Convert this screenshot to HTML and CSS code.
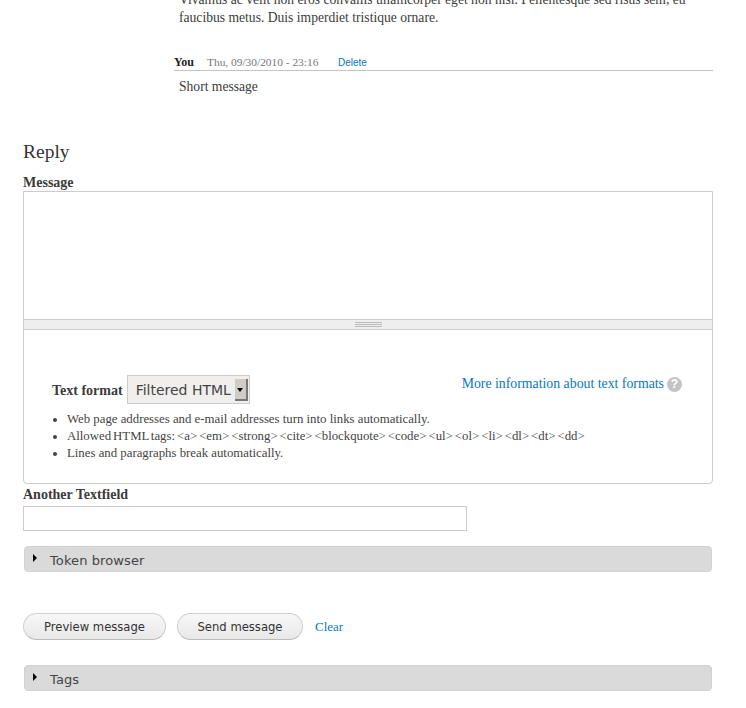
FILE: index.html
```html
<!DOCTYPE html>
<html lang="en">
<head>
    <meta charset="UTF-8">
    <title>Reply</title>
    <link rel="stylesheet" href="styles.css">
</head>
<body>
    <div class="page">

        <div class="thread">
            <p class="msg-body first">Vivamus ac velit non eros convallis ullamcorper eget non nisl. Pellentesque sed risus sem, eu faucibus metus. Duis imperdiet tristique ornare.</p>
            <div class="msg-head">
                <strong class="author">You</strong>
                <span class="date">Thu, 09/30/2010 - 23:16</span>
                <a class="delete" href="#">Delete</a>
            </div>
            <p class="msg-body">Short message</p>
        </div>

        <h2 class="reply-title">Reply</h2>

        <form class="reply-form" autocomplete="off">
            <label class="field-label" for="message">Message</label>
            <div class="editor">
                <textarea id="message" class="message-input"></textarea>
                <div class="grippie"><span class="grip-lines"></span></div>
                <div class="format">
                    <div class="format-top">
                        <div class="format-pick">
                            <label class="format-label">Text format</label>
                            <div class="fake-select">
                                <span>Filtered HTML</span>
                                <span class="select-arrow"></span>
                            </div>
                        </div>
                        <div class="format-help">
                            <a href="#">More information about text formats</a>
                            <span class="help-icon">?</span>
                        </div>
                    </div>
                    <ul class="tips">
                        <li>Web page addresses and e-mail addresses turn into links automatically.</li>
                        <li class="tip-tags">Allowed HTML tags: &lt;a&gt; &lt;em&gt; &lt;strong&gt; &lt;cite&gt; &lt;blockquote&gt; &lt;code&gt; &lt;ul&gt; &lt;ol&gt; &lt;li&gt; &lt;dl&gt; &lt;dt&gt; &lt;dd&gt;</li>
                        <li>Lines and paragraphs break automatically.</li>
                    </ul>
                </div>
            </div>

            <label class="field-label another" for="another">Another Textfield</label>
            <input type="text" id="another" class="text-input">

            <div class="fold token"><span class="fold-arrow"></span>Token browser</div>

            <div class="actions">
                <button type="button" class="btn preview">Preview message</button>
                <button type="button" class="btn send">Send message</button>
                <a class="clear" href="#">Clear</a>
            </div>

            <div class="fold tags"><span class="fold-arrow"></span>Tags</div>
        </form>

    </div>
</body>
</html>
```

FILE: styles.css
```css
html, body { margin: 0; padding: 0; background: #fff; }
body {
    height: 708px;
    overflow: hidden;
    font-family: "Liberation Serif", serif;
    font-size: 13.6px;
    color: #3b3b3b;
}
a { color: #0678be; text-decoration: none; }

.page { padding: 0 33px 0 23px; margin-top: -9px; }

/* message thread */
.thread { margin-left: 151px; }
.msg-body { margin: 0; padding-left: 5px; line-height: 18px; }
.msg-body.first { height: 36px; }
.msg-head {
    display: flex;
    align-items: baseline;
    margin-top: 27px;
    padding-top: 1px;
    height: 15px;
    line-height: 15px;
    border-bottom: 1px solid #c4c4c4;
    font-size: 11.4px;
}
.author { color: #222; width: 33px; font-size: 12px; }
.date { color: #777; width: 131px; }
.delete { font-family: "Liberation Sans", sans-serif; font-size: 10px; }
.thread .msg-body:last-child { margin-top: 7px; }

.reply-title { margin: 43px 0 0; font-size: 19.5px; font-weight: normal; line-height: 26px; color: #333; }

/* form */
.field-label { display: block; font-weight: bold; font-size: 14px; line-height: 16px; color: #3b3b3b; }
.reply-form > .field-label:first-child { margin-top: 10px; }

.editor { border: 1px solid #ccc; border-radius: 0 0 4px 4px; }
.message-input {
    display: block;
    width: 100%;
    height: 127px;
    margin: 0;
    padding: 0;
    border: 0;
    outline: none;
    resize: none;
    box-sizing: border-box;
}
.grippie {
    display: flex;
    justify-content: center;
    align-items: center;
    height: 9px;
    background: #eee;
    border-top: 1px solid #ccc;
    border-bottom: 1px solid #ccc;
}
.grip-lines { width: 27px; height: 5px; border-top: 1px solid #bbb; border-bottom: 1px solid #bbb; box-sizing: border-box; }
.grip-lines::after { content: ""; display: block; margin-top: 1px; border-top: 1px solid #bbb; }

.format { padding: 45px 30px 21px 28px; }
.format-top { display: flex; justify-content: space-between; }
.format-pick { display: flex; align-items: center; }
.format-label { font-weight: bold; font-size: 14px; margin-right: 4px; margin-top: 2px; }
.fake-select {
    display: flex;
    align-items: center;
    width: 123px;
    height: 29px;
    box-sizing: border-box;
    padding-left: 8px;
    background: #f0efee;
    border: 1px solid #ccc;
    font-family: "DejaVu Sans", sans-serif;
    font-size: 14px;
    color: #444;
}
.select-arrow {
    position: relative;
    width: 13px;
    height: 22px;
    margin-left: 4px;
    background: #cfccc6;
    border-right: 2px solid #777;
    border-bottom: 2px solid #777;
    box-sizing: border-box;
}
.select-arrow::after {
    content: "";
    position: absolute;
    left: 2px;
    top: 9px;
    border: 3px solid transparent;
    border-top: 4px solid #000;
    border-bottom: 0;
}
.format-help { display: flex; align-items: center; height: 16px; margin-top: 1px; }
.format-help a { color: #0678be; font-size: 13.8px; }
.help-icon {
    width: 15px;
    height: 15px;
    margin-left: 3px;
    border-radius: 50%;
    background: #c4c4c4;
    color: #fff;
    font-family: "Liberation Sans", sans-serif;
    font-size: 12px;
    font-weight: bold;
    line-height: 15px;
    text-align: center;
}
.tips { margin: 7px 0 0; padding: 0 0 0 15px; font-size: 12.8px; line-height: 17px; color: #444; }
.tip-tags { word-spacing: -1.2px; }

.another { margin-top: 3px; margin-bottom: 3px; }
.text-input {
    display: block;
    width: 444px;
    height: 25px;
    margin: 0;
    padding: 0;
    border: 1px solid #ccc;
    box-sizing: border-box;
    outline: none;
}

.fold {
    display: flex;
    align-items: center;
    height: 26px;
    margin: 0 1px;
    box-sizing: border-box;
    padding-left: 8px;
    padding-top: 2px;
    background: #dadada;
    border-radius: 4px;
    border: 1px solid #d2d2d2;
    font-family: "DejaVu Sans", sans-serif;
    font-size: 13px;
    letter-spacing: .1px;
    color: #444;
}
.fold-arrow {
    width: 0;
    height: 0;
    margin-right: 13px;
    margin-top: -5px;
    border-left: 4px solid #000;
    border-top: 4px solid transparent;
    border-bottom: 4px solid transparent;
}
.token { margin-top: 15px; }
.tags { margin-top: 25px; }

.actions { display: flex; align-items: center; margin-top: 41px; }
.btn {
    height: 27px;
    padding: 0;
    border: 1px solid #d0d0d0;
    border-bottom-color: #bbb;
    border-radius: 14px;
    background: linear-gradient(#f8f8f8, #e8e8e8);
    font-family: "DejaVu Sans", sans-serif;
    font-size: 11.6px;
    color: #333;
}
.preview { width: 143px; }
.send { width: 126px; margin-left: 11px; }
.clear { margin-left: 12px; font-size: 13px; }
```
